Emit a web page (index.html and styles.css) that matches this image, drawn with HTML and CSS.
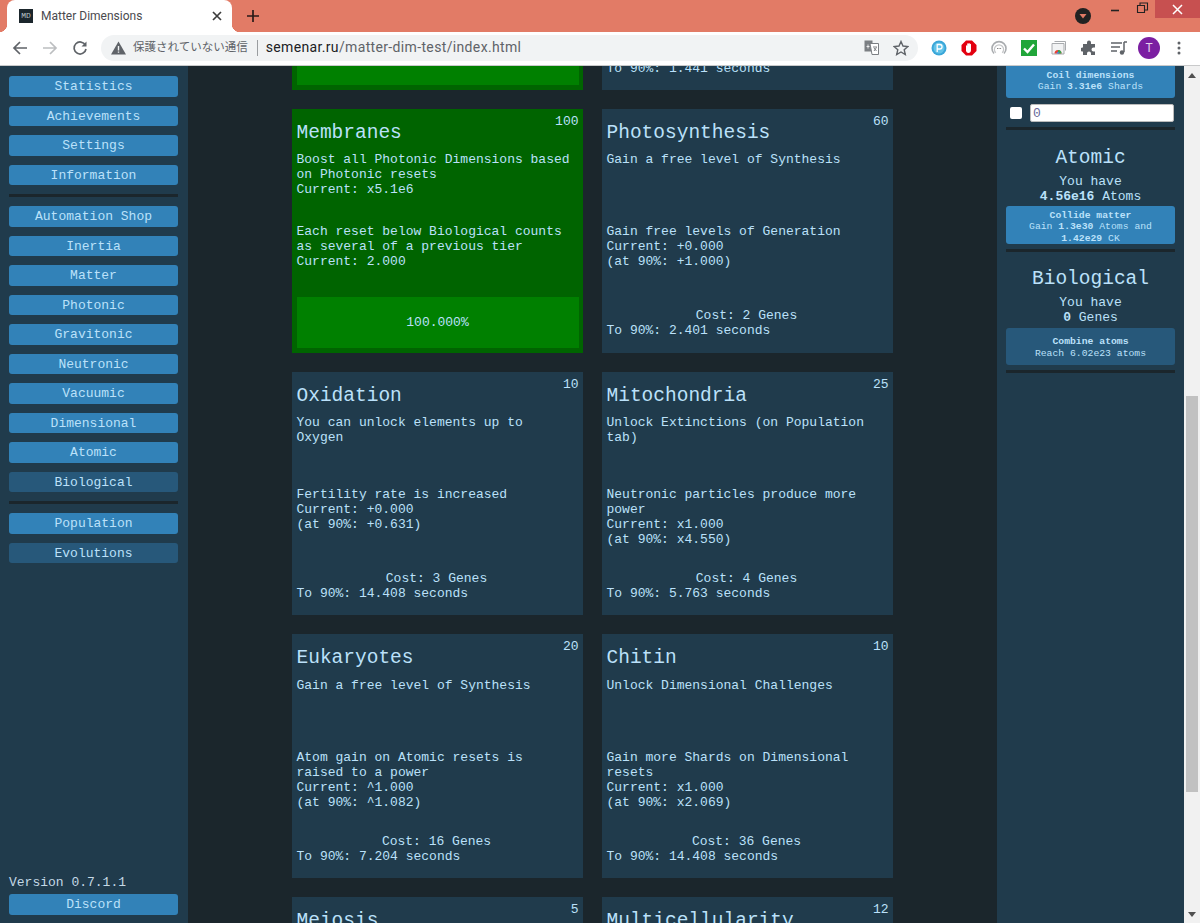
FILE: index.html
```html
<!DOCTYPE html>
<html lang="en">
<head>
<meta charset="utf-8">
<title>Matter Dimensions</title>
<link rel="stylesheet" href="styles.css">
</head>
<body>
<header class="browser">
  <div class="tabstrip">
    <div class="tab">
      <span class="favicon">MD</span>
      <span class="tab-title">Matter Dimensions</span>
      <svg class="tab-close" width="10" height="10" viewBox="0 0 10 10"><path d="M1 1l8 8M9 1l-8 8" stroke="#3c3c3c" stroke-width="1.7"/></svg>
    </div>
    <svg class="newtab" width="12" height="12" viewBox="0 0 12 12"><path d="M6 0v12M0 6h12" stroke="#2a1a18" stroke-width="1.7"/></svg>
    <div class="window-area">
      <svg class="profile-dot" width="16" height="16" viewBox="0 0 16 16"><circle cx="8" cy="8" r="8" fill="#222"/><path d="M4.5 6h7L8 10.5z" fill="#e27b66"/></svg>
      <svg class="win-btn" width="29" height="18" viewBox="0 0 29 18"><path d="M8 10.5h8" stroke="#222" stroke-width="1.6"/></svg>
      <svg class="win-btn" width="20" height="18" viewBox="-2 0 20 18"><path d="M3.5 5.5h7v7h-7z M6 5.5V3h7.5v7h-3" fill="none" stroke="#222" stroke-width="1.1"/></svg>
      <div class="win-close"><svg width="11" height="11" viewBox="0 0 11 11"><path d="M1 1l9 9M10 1l-9 9" stroke="#fff" stroke-width="1.5"/></svg></div>
    </div>
  </div>
  <div class="toolbar">
    <span class="tool"><svg width="16" height="16" viewBox="0 0 16 16"><path d="M15 8H2M8 2L2 8l6 6" fill="none" stroke="#5f6368" stroke-width="1.7"/></svg></span>
    <span class="tool"><svg width="16" height="16" viewBox="0 0 16 16"><path d="M1 8h13M8 2l6 6-6 6" fill="none" stroke="#bcbec0" stroke-width="1.7"/></svg></span>
    <span class="tool"><svg width="16" height="16" viewBox="0 0 16 16"><path d="M13.4 5.2A6 6 0 1 0 14 9" fill="none" stroke="#5f6368" stroke-width="1.7"/><path d="M14.5 1.5v5h-5z" fill="#5f6368"/></svg></span>
    <div class="address">
      <svg class="warn" width="15" height="14" viewBox="0 0 15 14"><path d="M7.5 0.5L15 13.5H0z" fill="#5f6368"/><path d="M6.8 5h1.4v4.5H6.8zM6.8 10.4h1.4v1.4H6.8z" fill="#f1f3f4"/></svg>
      <span class="insecure">保護されていない通信</span>
      <span class="addr-sep"></span>
      <span class="url"><span class="host">semenar.ru</span>/matter-dim-test/index.html</span>
      <svg class="translate" width="15" height="15" viewBox="0 0 15 15"><path d="M0.5 0.5h8v11h-8z" fill="#7b7f83"/><path d="M6 3.5h8.5v11H8z" fill="#fff" stroke="#7b7f83"/><path d="M2.5 6.5h3M4 4.5v4" fill="none" stroke="#fff" stroke-width="0.8"/><path d="M9 7h4M10 11l2.500-3.500M10 8l2.500 3" fill="none" stroke="#5f6368" stroke-width="0.8"/></svg>
      <svg class="star" width="16" height="16" viewBox="0 0 16 16"><path d="M8 1.500l2 4.500 4.900.5-3.700 3.200 1.100 4.800L8 12l-4.300 2.500 1.100-4.800L1.100 6.500 6 6z" fill="none" stroke="#5f6368" stroke-width="1.4"/></svg>
    </div>
    <div class="extensions">
      <span class="tool"><svg width="16" height="16" viewBox="0 0 16 16"><circle cx="8" cy="8" r="7.500" fill="#3aa6d8"/><circle cx="8" cy="8" r="5.500" fill="#63c3e8"/><path d="M6.200 12V4.500h2.600a2.200 2.200 0 0 1 0 4.500H6.200" fill="none" stroke="#fff" stroke-width="1.300"/></svg></span>
      <span class="tool"><svg width="16" height="16" viewBox="0 0 16 16"><path d="M5 0.500h6L15.500 5v6L11 15.500H5L0.500 11V5z" fill="#e3000f"/><path d="M5 11V6c0-1 1.200-1 1.200 0V4c0-1 1.300-1 1.300 0v-.3c0-1 1.300-1 1.300 0V4.500c0-1 1.200-1 1.200 0V10c0 2-1 3-2.700 3C6.300 13 5.500 12 5 11z" fill="#fff"/></svg></span>
      <span class="tool"><svg width="16" height="16" viewBox="0 0 16 16"><path d="M3 13.500A7 7 0 1 1 13 13.500" fill="none" stroke="#a9acaf" stroke-width="1.600"/><path d="M4.800 12.800A4.600 4.600 0 1 1 11.200 12.800" fill="none" stroke="#c4c6c8" stroke-width="1.200"/><path d="M6 8.500h.9M7.600 8.500h.9M9.200 8.500h.9" stroke="#777" stroke-width="1"/></svg></span>
      <span class="tool"><svg width="16" height="16" viewBox="0 0 16 16"><path d="M0 0h16v16H0z" fill="#21a63a"/><path d="M3 8.500l3.500 3.500L13 4.500" fill="none" stroke="#fff" stroke-width="2.400"/></svg></span>
      <span class="tool"><svg width="16" height="16" viewBox="0 0 16 16"><path d="M3.500 1.500h11v9" fill="none" stroke="#a8abae" stroke-width="1"/><path d="M1 3.500h12v10.500H1z" fill="#f2f3f4" stroke="#a8abae"/><path d="M3.500 13.500a3.500 3.500 0 0 1 7 0z" fill="#ea4335"/><path d="M7 13.500V10a3.500 3.500 0 0 1 3.500 3.500z" fill="#34a853"/><path d="M5.500 13.500a1.500 1.500 0 0 1 3 0z" fill="#4285f4"/></svg></span>
      <span class="tool"><svg width="16" height="16" viewBox="0 0 16 16"><path d="M6 2.500a2 2 0 0 1 4 0V4h4v3.500h-1.500a2 2 0 0 0 0 4H14V15H10v-1.500a2 2 0 0 0-4 0V15H2v-3.500h-.5a2 2 0 0 1 0-4H2V4h4z" fill="#5f6368"/></svg></span>
      <span class="tool"><svg width="16" height="16" viewBox="0 0 16 16"><path d="M0 3h11M0 7h9M0 11h6" stroke="#5f6368" stroke-width="1.500"/><path d="M13 2v10" stroke="#5f6368" stroke-width="1.500"/><path d="M13 2h3" stroke="#5f6368" stroke-width="1.500"/><circle cx="11" cy="12.500" r="2.200" fill="#5f6368"/></svg></span>
      <span class="tool"><span class="avatar">T</span></span>
      <span class="tool"><svg width="4" height="14" viewBox="0 0 4 14"><circle cx="2" cy="2" r="1.500" fill="#5f6368"/><circle cx="2" cy="7" r="1.500" fill="#5f6368"/><circle cx="2" cy="12" r="1.500" fill="#5f6368"/></svg></span>
    </div>
  </div>
</header>

<div class="page">
  <nav class="sidebar">
    <a class="btn">Statistics</a>
    <a class="btn">Achievements</a>
    <a class="btn">Settings</a>
    <a class="btn">Information</a>
    <div class="sep"></div>
    <a class="btn">Automation Shop</a>
    <a class="btn">Inertia</a>
    <a class="btn">Matter</a>
    <a class="btn">Photonic</a>
    <a class="btn">Gravitonic</a>
    <a class="btn">Neutronic</a>
    <a class="btn">Vacuumic</a>
    <a class="btn">Dimensional</a>
    <a class="btn">Atomic</a>
    <a class="btn dim">Biological</a>
    <div class="sep"></div>
    <a class="btn">Population</a>
    <a class="btn dim">Evolutions</a>
    <div class="version">Version 0.7.1.1</div>
    <a class="btn discord">Discord</a>
  </nav>

  <main class="content">
    <div class="grid">
      <article class="card done clipped"><div class="bar"></div></article>
      <article class="card clipped">
        <div class="cost-line">To 90%: 1.441 seconds</div>
      </article>

      <article class="card done">
        <span class="num">100</span>
        <h2>Membranes</h2>
        <p class="one">Boost all Photonic Dimensions based on Photonic resets<br>Current: x5.1e6</p>
        <p class="two short">Each reset below Biological counts as several of a previous tier<br>Current: 2.000</p>
        <div class="bar">100.000%</div>
      </article>
      <article class="card">
        <span class="num">60</span>
        <h2>Photosynthesis</h2>
        <p class="one">Gain a free level of Synthesis</p>
        <p class="two">Gain free levels of Generation<br>Current: +0.000<br>(at 90%: +1.000)</p>
        <div class="cost">Cost: 2 Genes</div>
        <div class="cost-line">To 90%: 2.401 seconds</div>
      </article>

      <article class="card">
        <span class="num">10</span>
        <h2>Oxidation</h2>
        <p class="one">You can unlock elements up to Oxygen</p>
        <p class="two">Fertility rate is increased<br>Current: +0.000<br>(at 90%: +0.631)</p>
        <div class="cost">Cost: 3 Genes</div>
        <div class="cost-line">To 90%: 14.408 seconds</div>
      </article>
      <article class="card">
        <span class="num">25</span>
        <h2>Mitochondria</h2>
        <p class="one">Unlock Extinctions (on Population tab)</p>
        <p class="two">Neutronic particles produce more power<br>Current: x1.000<br>(at 90%: x4.550)</p>
        <div class="cost">Cost: 4 Genes</div>
        <div class="cost-line">To 90%: 5.763 seconds</div>
      </article>

      <article class="card">
        <span class="num">20</span>
        <h2>Eukaryotes</h2>
        <p class="one">Gain a free level of Synthesis</p>
        <p class="two">Atom gain on Atomic resets is raised to a power<br>Current: ^1.000<br>(at 90%: ^1.082)</p>
        <div class="cost">Cost: 16 Genes</div>
        <div class="cost-line">To 90%: 7.204 seconds</div>
      </article>
      <article class="card">
        <span class="num">10</span>
        <h2>Chitin</h2>
        <p class="one">Unlock Dimensional Challenges</p>
        <p class="two">Gain more Shards on Dimensional resets<br>Current: x1.000<br>(at 90%: x2.069)</p>
        <div class="cost">Cost: 36 Genes</div>
        <div class="cost-line">To 90%: 14.408 seconds</div>
      </article>

      <article class="card">
        <span class="num">5</span>
        <h2>Meiosis</h2>
      </article>
      <article class="card">
        <span class="num">12</span>
        <h2>Multicellularity</h2>
      </article>
    </div>
  </main>

  <aside class="resets">
    <div class="action coil"><b>Coil dimensions</b><span>Gain <b>3.31e6</b> Shards</span></div>
    <div class="auto-row">
      <input class="auto-check" type="checkbox">
      <input class="auto-input" type="text" value="0">
    </div>
    <div class="sep"></div>
    <h3>Atomic</h3>
    <div class="have">You have<br><b>4.56e16</b> Atoms</div>
    <div class="action collide"><b>Collide matter</b><span>Gain <b>1.3e30</b> Atoms and <b>1.42e29</b> CK</span></div>
    <div class="sep"></div>
    <h3 class="bio">Biological</h3>
    <div class="have">You have<br><b>0</b> Genes</div>
    <div class="action combine"><b>Combine atoms</b><span>Reach 6.02e23 atoms</span></div>
    <div class="sep"></div>
  </aside>

  <div class="scrollbar">
    <svg class="arrow" width="8" height="5" viewBox="0 0 8 5"><path d="M4 0l4 5H0z" fill="#505050"/></svg>
    <div class="thumb"></div>
    <svg class="arrow down" width="8" height="5" viewBox="0 0 8 5"><path d="M0 0h8L4 5z" fill="#505050"/></svg>
  </div>
</div>
</body>
</html>
```

FILE: styles.css
```css
* { box-sizing: border-box; }

html, body {
  margin: 0;
  height: 923px;
  overflow: hidden;
}

body {
  font-family: "Liberation Mono", "DejaVu Sans Mono", monospace;
  font-size: 13px;
  line-height: 15px;
  color: #bbe1fa;
  background: #1b262c;
}

/* browser chrome */
.browser {
  height: 66px;
  font-family: Roboto, "Noto Sans CJK JP", sans-serif;
}

.tabstrip {
  height: 32px;
  display: flex;
  align-items: center;
  padding-left: 7px;
  background: #e27b66;
}

.tab {
  position: relative;
  width: 225px;
  height: 32px;
  display: flex;
  align-items: center;
  padding: 0 10px 0 12px;
  background: #fff;
  border-radius: 8px 8px 0 0;
}

.tab::before,
.tab::after {
  content: "";
  position: absolute;
  bottom: 0;
  width: 8px;
  height: 8px;
}

.tab::before {
  left: -8px;
  background: radial-gradient(circle at 0 0, transparent 8px, #fff 8.5px);
}

.tab::after {
  right: -8px;
  background: radial-gradient(circle at 100% 0, transparent 8px, #fff 8.5px);
}

.favicon {
  width: 14px;
  height: 14px;
  margin-right: 8px;
  background: #1b262c;
  color: #b8c4c8;
  font-size: 8px;
  line-height: 14px;
  text-align: center;
  font-family: "Liberation Mono", monospace;
}

.tab-title {
  flex: 1;
  font-size: 12px;
  color: #4a4a4e;
  white-space: nowrap;
}

.newtab {
  margin-left: 15px;
}

.window-area {
  margin-left: auto;
  height: 32px;
  display: flex;
  align-items: flex-start;
}

.profile-dot {
  margin: 8px 12px 0 0;
}

.win-btn {
  display: block;
}

.win-close {
  width: 45px;
  height: 18px;
  margin-left: 3px;
  display: flex;
  align-items: center;
  justify-content: center;
  background: #c75050;
}

.toolbar {
  height: 34px;
  display: flex;
  align-items: center;
  padding: 0 6px 2px 5px;
  background: #fff;
  border-bottom: 1px solid #c9cacb;
}

.tool {
  width: 30px;
  height: 30px;
  flex: none;
  display: flex;
  align-items: center;
  justify-content: center;
}

.address {
  flex: 1;
  height: 26px;
  margin: 0 6px;
  display: flex;
  align-items: center;
  padding: 0 9px 0 10px;
  background: #f1f3f4;
  border-radius: 13px;
  color: #5f6368;
  white-space: nowrap;
}

.insecure {
  margin-left: 7px;
  font-size: 11.5px;
}

.addr-sep {
  width: 1px;
  height: 16px;
  margin: 0 8px 0 9px;
  background: #9a9da0;
}

.url {
  font-size: 14px;
  letter-spacing: 0.35px;
}

.host {
  color: #202124;
}

.translate {
  margin-left: auto;
}

.star {
  margin-left: 14px;
}

.extensions {
  display: flex;
}

.avatar {
  width: 22px;
  height: 22px;
  border-radius: 50%;
  background: #7b1fa2;
  color: #e6d6ee;
  font-size: 12px;
  line-height: 22px;
  text-align: center;
}

/* app */
.page {
  height: 857px;
  display: flex;
  background: #1b262c;
}

.sidebar {
  width: 188px;
  flex: none;
  display: flex;
  flex-direction: column;
  padding: 10px 10px 0 9px;
  background: #203b4c;
}

.btn {
  height: 20.5px;
  flex: none;
  margin-bottom: 9px;
  padding-top: 1px;
  background: #3282b8;
  border-radius: 3px;
  line-height: 20.5px;
  text-align: center;
}

.btn.dim {
  background: #27587a;
}

.sep {
  height: 3px;
  flex: none;
  margin-bottom: 9px;
  background: #1b262c;
}

.version {
  margin-top: auto;
  margin-bottom: 4.500px;
  line-height: 15px;
  color: #c4d9e6;
}

.discord {
  margin-bottom: 8.500px;
}

.content {
  flex: 1;
  min-width: 0;
  height: 857px;
  overflow: hidden;
}

.grid {
  display: grid;
  justify-content: center;
  grid-template-columns: 291px 291px;
  grid-template-rows: 23.750px;
  grid-auto-rows: 243.750px;
  gap: 19px;
}

.card {
  position: relative;
  display: flex;
  flex-direction: column;
  padding: 12px 4.500px 0;
  background: #203b4c;
  overflow: hidden;
}

.card.clipped {
  justify-content: flex-end;
  padding-top: 0;
  padding-bottom: 14px;
}

.card.done {
  background: #006400;
}

.card.done.clipped {
  padding-bottom: 5px;
}

.clipped .bar {
  flex: 1;
  min-height: 19px;
}

.clipped .cost-line {
  flex: none;
}

.num {
  position: absolute;
  top: 5px;
  right: 4.500px;
}

h2, h3 {
  margin: 0;
  font-size: 19.500px;
  line-height: 24px;
  font-weight: 400;
}

.card p {
  margin: 0;
  max-width: 280px;
}

.one {
  height: 72px;
  margin-top: 7.250px !important;
}

.two {
  height: 84px;
  flex: none;
}

.two.short {
  height: 72.750px;
}

.cost {
  text-align: center;
  padding-right: 2px;
}

.bar {
  height: 51px;
  flex: none;
  background: #008000;
  line-height: 51px;
  text-align: center;
}

/* right panel */
.resets {
  width: 187px;
  flex: none;
  display: flex;
  flex-direction: column;
  padding: 0 9px;
  background: #203b4c;
  text-align: center;
}

.resets h3 {
  margin-top: 7px;
}

.resets h3.bio {
  margin-top: 6px;
}

.resets .sep {
  margin: 5px 0 9px;
}

.have {
  margin-top: 4px;
}

.action {
  display: flex;
  flex-direction: column;
  justify-content: center;
  padding: 0 4px;
  background: #3282b8;
  border-radius: 3px;
  font-size: 9.750px;
  line-height: 11.500px;
}

.action span {
  display: block;
}

.coil {
  height: 32px;
  justify-content: flex-end;
  padding-bottom: 5.500px;
  border-radius: 0 0 3px 3px;
}

.collide {
  height: 38px;
  margin-top: 2px;
  padding-top: 4px;
}

.combine {
  height: 37px;
  margin-top: 3px;
  padding-top: 2px;
  background: #27587a;
}

.auto-row {
  display: flex;
  align-items: center;
  height: 18px;
  margin-top: 6px;
}

.auto-check {
  width: 12px;
  height: 12px;
  margin: 0 8px 0 4px;
  appearance: none;
  background: #fff;
  border-radius: 2px;
}

.auto-input {
  width: 144px;
  height: 18px;
  padding: 0 2px;
  border: 1px solid #bbb;
  background: #fff;
  color: #6a6a9a;
  font: 13px "Liberation Mono", monospace;
  border-radius: 2px;
}

.scrollbar {
  width: 16px;
  flex: none;
  display: flex;
  flex-direction: column;
  align-items: center;
  padding-top: 7px;
  background: #f1f1f1;
}

.arrow {
  flex: none;
}

.thumb {
  width: 12px;
  height: 396px;
  flex: none;
  margin-top: 318px;
  background: #c1c1c1;
}

.arrow.down {
  margin-top: 120px;
}
```
